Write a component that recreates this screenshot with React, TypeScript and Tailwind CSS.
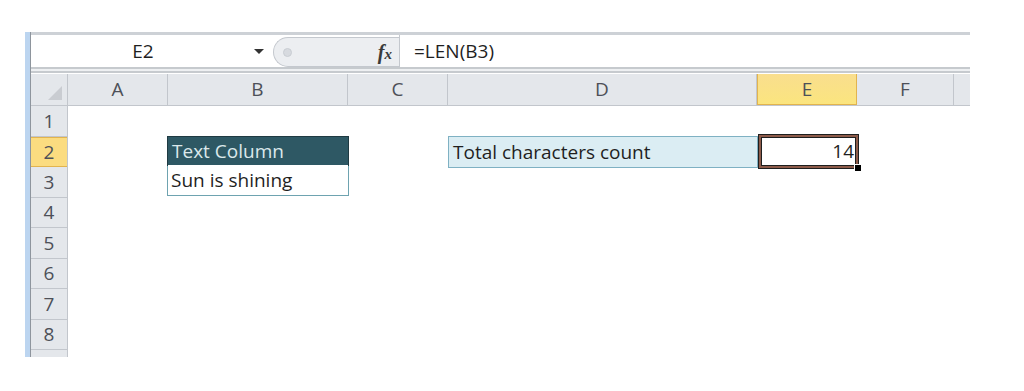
import React from "react";

const cols = [
  { name: "A", w: "w-[100px]" },
  { name: "B", w: "w-[180px]" },
  { name: "C", w: "w-[100px]" },
  { name: "D", w: "w-[309px]" },
  { name: "E", w: "w-[100px]" },
  { name: "F", w: "w-[97px]" },
];

const rowH = ["h-[31px]", "h-[30px]", "h-[31px]", "h-[30px]", "h-[31px]", "h-[30px]", "h-[31px]", "h-[30px]"];

const App = () => {
  return (
    <div
      className="w-[1024px] h-[391px] bg-white pt-[32px] pl-[25px] text-[19px] text-[#1f1f1f]"
      style={{ fontFamily: '"Open Sans", "Noto Sans", sans-serif' }}
    >
      <div className="flex w-[945px]">
        {/* blue window edge */}
        <div className="w-[6px] bg-[#bcd5f0] border-r border-[#8e959d]" />
        <div className="flex-1">
          {/* formula bar */}
          <div className="h-[3px] bg-[#cdd1d6]" />
          <div className="flex h-[32px] items-stretch bg-white">
            <div className="w-[214px] flex items-center justify-center pl-[10px]">E2</div>
            <div className="w-[28px] flex items-center justify-center">
              <div className="w-0 h-0 border-l-[5px] border-r-[5px] border-t-[5px] border-l-transparent border-r-transparent border-t-[#333]" />
            </div>
            <div className="flex-none w-[126px] mt-[2px] bg-[#eceef1] rounded-l-full border border-r-0 border-[#c4c8ce] flex items-center">
              <div className="w-[9px] h-[9px] ml-[9px] rounded-full bg-[#d7dadf] border border-[#c9cdd3]" />
              <span
                className="ml-auto mr-[7px] italic font-bold text-[20px] text-[#3a3a3a]"
                style={{ fontFamily: '"Liberation Serif", serif' }}
              >
                f<span className="text-[15px]">x</span>
              </span>
            </div>
            <div className="flex-1 border-l border-[#c4c8ce] flex items-center pl-[14px]">=LEN(B3)</div>
          </div>
          <div className="h-[6px] border-t-2 border-b-2 border-[#c6cace] bg-[#eef0f2]" />
          {/* column headers */}
          <div className="flex h-[32px] mt-[1px] bg-[#e4e7eb] border-b border-[#c2c6cc]">
            <div className="w-[37px] border-r border-[#c2c6cc] flex items-end justify-end pr-[5px] pb-[5px]">
              <div className="w-0 h-0 border-l-[14px] border-b-[14px] border-l-transparent border-b-[#c9ccd1]" />
            </div>
            {cols.map((c) =>
              c.name === "E" ? (
                <div
                  key={c.name}
                  className={`${c.w} flex items-center justify-center bg-gradient-to-b from-[#f9de8e] to-[#fbe57e] border-x border-b border-[#e2b44e] text-[#4d5058]`}
                >
                  {c.name}
                </div>
              ) : (
                <div key={c.name} className={`${c.w} flex items-center justify-center border-r border-[#c2c6cc] text-[#4d5058]`}>
                  {c.name}
                </div>
              )
            )}
            <div className="flex-1" />
          </div>
          {/* rows */}
          <div className="flex">
            <div className="w-[37px] bg-[#e4e7eb] border-r border-[#c2c6cc] pb-[7px]">
              {rowH.map((h, i) =>
                i === 1 ? (
                  <div key={i} className={`${h} flex items-center justify-center bg-[#fbdc80] border-y border-[#e2b44e] text-[#4d5058]`}>
                    {i + 1}
                  </div>
                ) : (
                  <div key={i} className={`${h} flex items-center justify-center border-b border-[#c2c6cc] text-[#4d5058]`}>
                    {i + 1}
                  </div>
                )
              )}
            </div>
            <div className="flex-1 pt-[30px] pl-[99px]">
              <div className="flex items-start">
                {/* B2:B3 table */}
                <div className="w-[182px] border border-[#6ea3b0]">
                  <div className="h-[30px] bg-[#2e5864] text-[#dbe8eb] flex items-center pl-[4px] border border-[#1f3a42] -m-px">
                    Text Column
                  </div>
                  <div className="h-[30px] bg-white flex items-center pl-[3px]">Sun is shining</div>
                </div>
                {/* D2 label */}
                <div className="ml-[99px] w-[310px] h-[32px] bg-[#dbedf3] border border-[#7fb1c3] flex items-center pl-[4px]">
                  Total characters count
                </div>
                {/* E2 selected cell */}
                <div className="relative -mt-[2px] w-[101px] h-[35px] border border-[#1e1e1e] bg-white">
                  <div className="h-full border-2 border-[#8d5b4a]">
                    <div className="h-full border border-[#1e1e1e] flex items-center justify-end pr-[1px]">14</div>
                  </div>
                  <div className="absolute -right-[4px] -bottom-[4px] w-[8px] h-[8px] bg-black border border-white" />
                </div>
              </div>
            </div>
          </div>
        </div>
      </div>
    </div>
  );
};

export default App;
